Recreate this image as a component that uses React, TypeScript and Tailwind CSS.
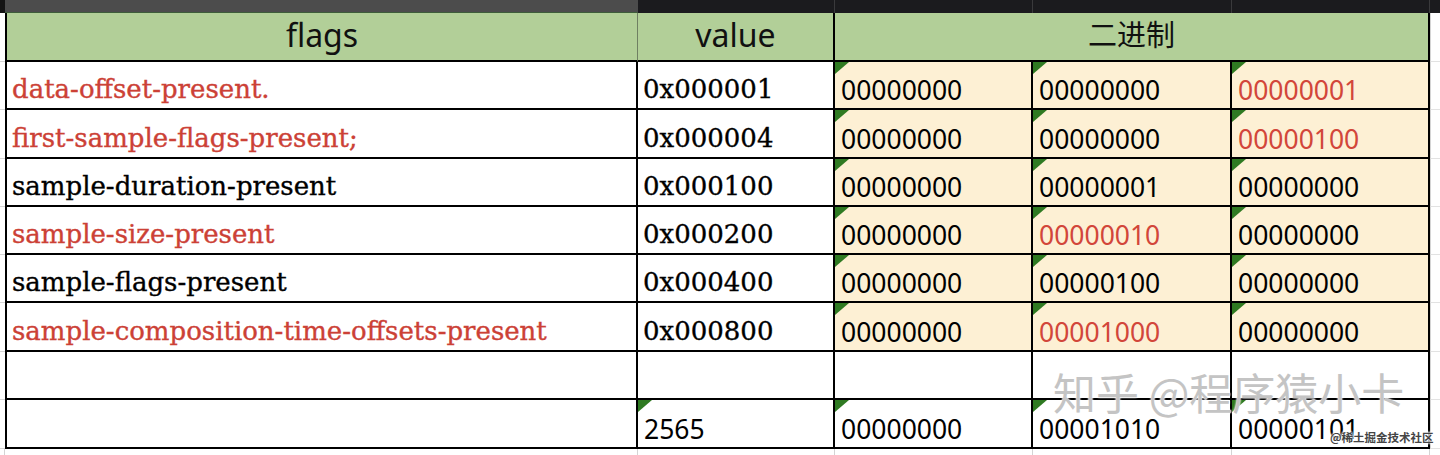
import React from 'react';

type Row = {
  flag: string;
  red: boolean;
  value: string;
  bins: string[];
  redIdx: number;
  h: string;
};

const rows: Row[] = [
  { flag: 'data-offset-present.', red: true, value: '0x000001', bins: ['00000000', '00000000', '00000001'], redIdx: 2, h: 'h-[48px]' },
  { flag: 'first-sample-flags-present;', red: true, value: '0x000004', bins: ['00000000', '00000000', '00000100'], redIdx: 2, h: 'h-[49px]' },
  { flag: 'sample-duration-present', red: false, value: '0x000100', bins: ['00000000', '00000001', '00000000'], redIdx: -1, h: 'h-[48px]' },
  { flag: 'sample-size-present', red: true, value: '0x000200', bins: ['00000000', '00000010', '00000000'], redIdx: 1, h: 'h-[48px]' },
  { flag: 'sample-flags-present', red: false, value: '0x000400', bins: ['00000000', '00000100', '00000000'], redIdx: -1, h: 'h-[48px]' },
  { flag: 'sample-composition-time-offsets-present', red: true, value: '0x000800', bins: ['00000000', '00001000', '00000000'], redIdx: 1, h: 'h-[49px]' },
];

const serif = "font-['DejaVu_Serif',serif] [-webkit-text-stroke:0.35px_currentColor]";
const sans = "font-['Noto_Sans',sans-serif]";
const binW = ['w-[198px]', 'w-[199px]', 'w-[198px]'];

function Corner() {
  return (
    <div className="absolute left-0 top-0 w-[14px] h-[12px] bg-[#2f7a22] [clip-path:polygon(0_0,100%_0,0_100%)]" />
  );
}

function Strip({ h }: { h: string }) {
  return <div className={`${h} w-[5px] border-b border-[#d4d4d4] bg-white`} />;
}

function Tail({ h }: { h: string }) {
  return <div className={`${h} flex-1 border-b border-[#e2e2e2] border-l border-l-[#d4d4d4] bg-white`} />;
}

function BinCell({ text, red, w, bg, mark }: { text: string; red: boolean; w: string; bg: string; mark: boolean }) {
  return (
    <div className={`relative ${w} ${bg} border-r-2 border-b-2 border-black flex items-end pl-[6px]`}>
      {mark && <Corner />}
      <span className={`${sans} text-[26.5px] leading-[36px] ${red ? 'text-[#d2463a]' : 'text-black'}`}>{text}</span>
    </div>
  );
}

export default function App() {
  return (
    <div className="relative w-[1440px] h-[455px] bg-white overflow-hidden">
      {/* column header bar */}
      <div className="flex h-[13px]">
        <div className="w-[5px] bg-[#141414]" />
        <div className="w-[633px] bg-[#4c4c4c] border-b border-[#3e5d3a]" />
        {['w-[197px]', 'w-[198px]', 'w-[199px]', 'w-[198px]'].map((w, i) => (
          <div key={i} className={`${w} bg-[#1b1b1e] border-r border-[#3a3a3c]`} />
        ))}
        <div className="flex-1 bg-[#1b1b1e]" />
      </div>

      {/* header */}
      <div className="flex">
        <Strip h="h-[49px]" />
        <div className="h-[49px] w-[633px] bg-[#b2cf98] border-l-2 border-black border-b-2 border-r border-r-[#6f7f62] flex items-center justify-center pb-[3px]">
          <span className={`${sans} text-[32px] text-[#111]`}>flags</span>
        </div>
        <div className="h-[49px] w-[197px] bg-[#b2cf98] border-r-2 border-b-2 border-black flex items-center justify-center pb-[3px]">
          <span className={`${sans} text-[32px] text-[#111]`}>value</span>
        </div>
        <div className="h-[49px] w-[595px] bg-[#b2cf98] border-r-2 border-b-2 border-black flex items-center justify-center pb-[6px]">
          <span className="font-['Noto_Sans_CJK_SC',sans-serif] text-[29px] text-[#111]">二进制</span>
        </div>
        <Tail h="h-[49px]" />
      </div>

      {rows.map((r) => (
        <div key={r.flag} className="flex">
          <Strip h={r.h} />
          <div className={`${r.h} w-[633px] border-l-2 border-r-2 border-b-2 border-black flex items-end pl-[5px]`}>
            <span className={`${serif} text-[26px] leading-[38px] ${r.red ? 'text-[#cc4136]' : 'text-black'}`}>{r.flag}</span>
          </div>
          <div className={`${r.h} w-[197px] border-r-2 border-b-2 border-black flex items-end pl-[5px]`}>
            <span className={`${serif} text-[26px] leading-[38px] text-black`}>{r.value}</span>
          </div>
          {r.bins.map((b, i) => (
            <div key={i} className={`${r.h} flex`}>
              <BinCell text={b} red={i === r.redIdx} w={binW[i]} bg="bg-[#fdf0d4]" mark />
            </div>
          ))}
          <Tail h={r.h} />
        </div>
      ))}

      {/* empty row */}
      <div className="flex">
        <Strip h="h-[48px]" />
        <div className="h-[48px] w-[633px] border-l-2 border-r-2 border-b-2 border-black" />
        <div className="h-[48px] w-[197px] border-r-2 border-b-2 border-black" />
        {binW.map((w, i) => (
          <div key={i} className={`h-[48px] ${w} border-r-2 border-b-2 border-black`} />
        ))}
        <Tail h="h-[48px]" />
      </div>

      {/* total row */}
      <div className="flex">
        <Strip h="h-[49px]" />
        <div className="h-[49px] w-[633px] border-l-2 border-r-2 border-b-2 border-black" />
        <div className="relative h-[49px] w-[197px] border-r-2 border-b-2 border-black flex items-end pl-[6px]">
          <Corner />
          <span className={`${sans} text-[26.5px] leading-[36px] text-black`}>2565</span>
        </div>
        {['00000000', '00001010', '00000101'].map((b, i) => (
          <div key={i} className="h-[49px] flex">
            <BinCell text={b} red={false} w={binW[i]} bg="bg-white" mark />
          </div>
        ))}
        <Tail h="h-[49px]" />
      </div>

      {/* bottom gridline remnant */}
      <div className="flex h-[6px]">
        <div className="w-[5px] border-r border-[#d4d4d4]" />
        <div className="w-[633px] border-r border-[#d4d4d4]" />
        <div className="w-[197px] border-r border-[#d4d4d4]" />
        <div className="w-[198px] border-r border-[#d4d4d4]" />
        <div className="w-[199px] border-r border-[#d4d4d4]" />
        <div className="w-[198px] border-r border-[#d4d4d4]" />
      </div>

      {/* watermarks */}
      <div className="absolute left-[1053px] top-[370px] font-['Noto_Sans_CJK_SC',sans-serif] text-[43px] leading-none text-[#c4c4c4] [text-shadow:0_0_2px_#fff,0_0_2px_#fff] whitespace-nowrap">
        知乎 @程序猿小卡
      </div>
      <div className="absolute left-[1330px] top-[432px] font-['Noto_Sans_CJK_SC',sans-serif] text-[11.5px] leading-none font-bold text-[#444] [text-shadow:0_0_2px_#fff,0_0_2px_#fff,0_0_3px_#fff] whitespace-nowrap">
        @稀土掘金技术社区
      </div>
    </div>
  );
}
